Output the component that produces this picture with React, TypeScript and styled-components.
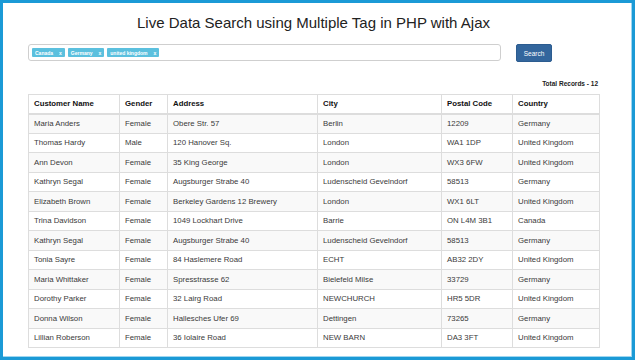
import React from "react";
import styled, { createGlobalStyle } from "styled-components";

const GlobalStyle = createGlobalStyle`
  html, body { margin: 0; padding: 0; background: #ffffff; }
  body { font-family: "Liberation Sans", Arial, sans-serif; color: #333; }
`;

const Frame = styled.div`
  box-sizing: border-box;
  width: 635px;
  height: 360px;
  border-style: solid;
  border-color: #1b9ad6;
  border-width: 3px 3px 3px 3px;
  box-shadow: inset -1px -1px 0 #9fd6f0;
  overflow: hidden;
  background: #fff;
`;

const Container = styled.div`
  width: 571px;
  margin-left: 25px;
  display: flex;
  flex-direction: column;
`;

const Title = styled.h3`
  margin: 10px 0 0 0;
  height: 20px;
  line-height: 20px;
  text-align: center;
  font-weight: normal;
  font-size: 15px;
  color: #222;
`;

const SearchRow = styled.div`
  display: flex;
  align-items: flex-start;
  margin-top: 11px;
  gap: 15px;
`;

const TagBox = styled.div`
  box-sizing: border-box;
  width: 473px;
  height: 17px;
  border: 1px solid #cfcfcf;
  border-radius: 3px;
  display: flex;
  align-items: center;
  gap: 3px;
  padding: 0 3px;
`;

const Tag = styled.span`
  display: inline-flex;
  align-items: center;
  height: 9px;
  padding: 0 3px;
  background: #5bc0de;
  color: #fff;
  font-size: 5px;
  font-weight: bold;
  border-radius: 1px;
  gap: 6px;
`;

const Button = styled.button`
  box-sizing: border-box;
  width: 36px;
  height: 18px;
  padding: 0;
  border: 1px solid #2c5c90;
  border-radius: 2px;
  background: #33669d;
  color: #fff;
  font-family: "Liberation Sans", Arial, sans-serif;
  font-size: 6.5px;
`;

const Total = styled.div`
  margin-top: 17px;
  text-align: right;
  padding-right: 1px;
  font-size: 6.5px;
  font-weight: bold;
  color: #222;
  height: 9px;
  line-height: 9px;
`;

const Table = styled.table`
  margin-top: 6px;
  width: 571px;
  border-collapse: collapse;
  table-layout: fixed;
  font-size: 7.8px;
`;

const Th = styled.th<{ $w: number }>`
  width: ${(p) => p.$w}px;
  height: 19px;
  box-sizing: border-box;
  border: 1px solid #dddddd;
  border-bottom-width: 2px;
  padding: 0 5px;
  text-align: left;
  font-weight: bold;
  color: #111;
`;

const Tr = styled.tr<{ $striped: boolean }>`
  background: ${(p) => (p.$striped ? "#f9f9f9" : "#ffffff")};
`;

const Td = styled.td`
  height: 19.5px;
  box-sizing: border-box;
  border: 1px solid #dddddd;
  padding: 0 5px;
  color: #3a3a3a;
  white-space: nowrap;
`;

const columns: [string, number][] = [
  ["Customer Name", 91],
  ["Gender", 48],
  ["Address", 150],
  ["City", 124],
  ["Postal Code", 71],
  ["Country", 87],
];

const rows: string[][] = [
  ["Maria Anders", "Female", "Obere Str. 57", "Berlin", "12209", "Germany"],
  ["Thomas Hardy", "Male", "120 Hanover Sq.", "London", "WA1 1DP", "United Kingdom"],
  ["Ann Devon", "Female", "35 King George", "London", "WX3 6FW", "United Kingdom"],
  ["Kathryn Segal", "Female", "Augsburger Strabe 40", "Ludenscheid Gevelndorf", "58513", "Germany"],
  ["Elizabeth Brown", "Female", "Berkeley Gardens 12 Brewery", "London", "WX1 6LT", "United Kingdom"],
  ["Trina Davidson", "Female", "1049 Lockhart Drive", "Barrie", "ON L4M 3B1", "Canada"],
  ["Kathryn Segal", "Female", "Augsburger Strabe 40", "Ludenscheid Gevelndorf", "58513", "Germany"],
  ["Tonia Sayre", "Female", "84 Haslemere Road", "ECHT", "AB32 2DY", "United Kingdom"],
  ["Maria Whittaker", "Female", "Spresstrasse 62", "Bielefeld Milse", "33729", "Germany"],
  ["Dorothy Parker", "Female", "32 Lairg Road", "NEWCHURCH", "HR5 5DR", "United Kingdom"],
  ["Donna Wilson", "Female", "Hallesches Ufer 69", "Dettingen", "73265", "Germany"],
  ["Lillian Roberson", "Female", "36 Iolaire Road", "NEW BARN", "DA3 3FT", "United Kingdom"],
];

const tags = ["Canada", "Germany", "united kingdom"];

export default function App() {
  return (
    <>
      <GlobalStyle />
      <Frame>
        <Container>
          <Title>Live Data Search using Multiple Tag in PHP with Ajax</Title>
          <SearchRow>
            <TagBox>
              {tags.map((t) => (
                <Tag key={t}>
                  {t}
                  <span>x</span>
                </Tag>
              ))}
            </TagBox>
            <Button>Search</Button>
          </SearchRow>
          <Total>Total Records - 12</Total>
          <Table>
            <thead>
              <tr>
                {columns.map(([c, w]) => (
                  <Th key={c} $w={w}>
                    {c}
                  </Th>
                ))}
              </tr>
            </thead>
            <tbody>
              {rows.map((r, i) => (
                <Tr key={i} $striped={i % 2 === 0}>
                  {r.map((c, j) => (
                    <Td key={j}>{c}</Td>
                  ))}
                </Tr>
              ))}
            </tbody>
          </Table>
        </Container>
      </Frame>
    </>
  );
}
